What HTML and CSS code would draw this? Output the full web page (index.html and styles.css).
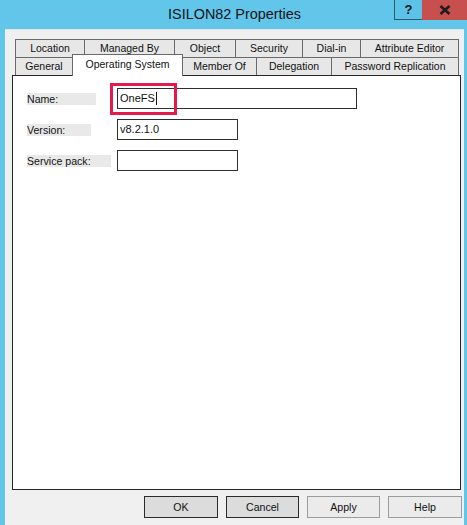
FILE: index.html
```html
<!DOCTYPE html>
<html>
<head>
<meta charset="utf-8">
<link rel="stylesheet" href="styles.css">
</head>
<body>
<div class="window">
  <div class="titlebar">
    <div></div>
    <div class="title">ISILON82 Properties</div>
    <div class="caption-btns">
      <div class="cb cb-help">?</div>
      <div class="cb cb-close">
        <svg width="12" height="10" viewBox="0 0 12 10"><path d="M1.5 1 L10.5 9 M10.5 1 L1.5 9" stroke="#1c1c1c" stroke-width="2.6" fill="none"/></svg>
      </div>
    </div>
  </div>
  <div class="client">
    <div class="tabs">
      <div class="tabrow">
        <div class="tab t-location">Location</div>
        <div class="tab t-managed">Managed By</div>
        <div class="tab t-object">Object</div>
        <div class="tab t-security">Security</div>
        <div class="tab t-dialin">Dial-in</div>
        <div class="tab t-attr">Attribute Editor</div>
      </div>
      <div class="tabrow">
        <div class="tab t-general">General</div>
        <div class="tab t-os selected">Operating System</div>
        <div class="tab t-member">Member Of</div>
        <div class="tab t-deleg">Delegation</div>
        <div class="tab t-pass">Password Replication</div>
      </div>
    </div>
    <div class="panel">
      <div class="form">
        <div class="field">
          <span class="label l-name">Name:</span>
          <div class="input-wrap">
            <div class="input i-wide">OneFS<span class="caret"></span></div>
            <div class="highlight"></div>
          </div>
        </div>
        <div class="field">
          <span class="label l-version">Version:</span>
          <div class="input-wrap">
            <div class="input i-short">v8.2.1.0</div>
          </div>
        </div>
        <div class="field">
          <span class="label l-sp">Service pack:</span>
          <div class="input-wrap">
            <div class="input i-short"></div>
          </div>
        </div>
      </div>
    </div>
    <div class="buttons">
      <div class="btn btn-dark b-ok">OK</div>
      <div class="btn btn-dark b-cancel">Cancel</div>
      <div class="btn btn-light b-apply">Apply</div>
      <div class="btn btn-light b-help">Help</div>
    </div>
  </div>
</div>
</body>
</html>
```

FILE: styles.css
```css
html, body {
  margin: 0;
  padding: 0;
  background: #62c5ea;
}

body {
  font-family: "Liberation Sans", Arial, sans-serif;
  color: #111;
}

.window {
  width: 467px;
  height: 525px;
  background: #62c5ea;
  display: flex;
  flex-direction: column;
  overflow: hidden;
}

.titlebar {
  height: 29px;
  flex: none;
  display: grid;
  grid-template-columns: 1fr auto 1fr;
}

.title {
  font-size: 14.4px;
  line-height: 29px;
  color: #141414;
  padding-left: 2px;
}

.caption-btns {
  justify-self: end;
  align-self: start;
  display: flex;
}

.cb {
  height: 20px;
  box-sizing: border-box;
  display: flex;
  align-items: center;
  justify-content: center;
}

.cb-help {
  width: 28px;
  background: #5cc2e8;
  border-left: 1px solid #2c5a6e;
  border-bottom: 1px solid #2c5a6e;
  font-weight: bold;
  font-size: 13px;
  color: #111;
}

.cb-close {
  width: 45px;
  background: #c7504e;
}

.client {
  flex: 1;
  margin: 0 3px 0 5px;
  background: #f0f0f0;
  padding: 9px 0 0 7px;
  border-top: 1px solid #e2e2e2;
  box-sizing: border-box;
}

.tabs {
  padding-left: 3px;
}

.tabrow {
  display: flex;
  align-items: flex-start;
  height: 18px;
}

.tab {
  height: 18px;
  box-sizing: border-box;
  border: 1px solid #6a6a6a;
  border-bottom: none;
  background: #e7e7e7;
  font-size: 10.5px;
  line-height: 16px;
  text-align: center;
  white-space: nowrap;
  color: #111;
}

.tab + .tab {
  border-left: none;
}

.tab.selected {
  position: relative;
  z-index: 2;
  height: 22px;
  margin-top: -3px;
  margin-bottom: -1px;
  background: #fff;
  border-left: 1px solid #6a6a6a;
  line-height: 18px;
}

.tab.selected + .tab {
  border-left: none;
}

.t-location { width: 70px; }
.t-managed { width: 90px; }
.t-object { width: 61px; }
.t-security { width: 67px; }
.t-dialin { width: 58px; }
.t-attr { width: 98px; }

.t-general { width: 58px; }
.t-os { width: 111px; margin-left: -1px; }
.t-member { width: 74px; }
.t-deleg { width: 75px; }
.t-pass { width: 127px; }

.panel {
  width: 449px;
  height: 415px;
  box-sizing: border-box;
  border: 1px solid #262626;
  background: #fff;
}

.form {
  padding: 12px 0 0 14px;
  display: flex;
  flex-direction: column;
  gap: 10px;
}

.field {
  display: grid;
  grid-template-columns: 90px auto;
  align-items: center;
  height: 21px;
}

.label {
  display: block;
  height: 12px;
  font-size: 10.6px;
  line-height: 12px;
  background: #e9e9e9;
  color: #111;
  white-space: nowrap;
}

.l-name { width: 69px; }
.l-version { width: 64px; }
.l-sp { width: 84px; }

.input-wrap {
  position: relative;
}

.input {
  height: 21px;
  box-sizing: border-box;
  border: 1px solid #2e2e2e;
  background: #fff;
  padding-left: 2px;
  font-size: 11px;
  line-height: 19px;
  color: #111;
  display: flex;
  align-items: center;
}

.i-wide { width: 240px; }
.i-short { width: 121px; }

.caret {
  display: inline-block;
  width: 1px;
  height: 13px;
  background: #111;
  margin-left: 1px;
}

.highlight {
  position: absolute;
  left: -7px;
  top: -5px;
  width: 67px;
  height: 32px;
  box-sizing: border-box;
  border: 3px solid #e4194c;
}

.buttons {
  width: 449px;
  margin-top: 6px;
  display: flex;
  justify-content: flex-end;
  gap: 8px;
}

.btn {
  height: 22px;
  box-sizing: border-box;
  font-size: 10.6px;
  line-height: 20px;
  text-align: center;
  color: #111;
}

.btn-dark {
  background: #dcdcdc;
  border: 1px solid #2a2a2a;
}

.btn-light {
  background: #ebebeb;
  border: 1px solid #9c9c9c;
}

.b-ok { width: 74px; }
.b-cancel { width: 73px; }
.b-apply { width: 73px; }
.b-help { width: 74px; margin-right: -1px; }
```
